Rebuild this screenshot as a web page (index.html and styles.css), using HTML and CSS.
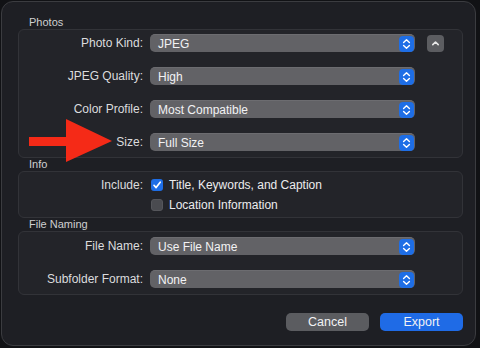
FILE: index.html
```html
<!DOCTYPE html>
<html>
<head>
<meta charset="utf-8">
<link rel="stylesheet" href="styles.css">
</head>
<body>
<div class="window">
  <div class="section-title">Photos</div>
  <div class="box photos">
    <div class="row">
      <div class="label">Photo Kind:</div>
      <div class="popup"><span>JPEG</span><span class="stepper"><svg width="15" height="16" viewBox="0 0 15 16"><path d="M4.6 6.6 L7.5 3.8 L10.4 6.6 M4.6 9.4 L7.5 12.2 L10.4 9.4" fill="none" stroke="#fff" stroke-width="1.4" stroke-linecap="round" stroke-linejoin="round"/></svg></span></div>
      <div class="disclosure"><svg width="17" height="17" viewBox="0 0 17 17"><path d="M5.8 9.6 L8.5 7 L11.2 9.6" fill="none" stroke="#e8e8e8" stroke-width="1.6" stroke-linecap="round" stroke-linejoin="round"/></svg></div>
    </div>
    <div class="row">
      <div class="label">JPEG Quality:</div>
      <div class="popup"><span>High</span><span class="stepper"><svg width="15" height="16" viewBox="0 0 15 16"><path d="M4.6 6.6 L7.5 3.8 L10.4 6.6 M4.6 9.4 L7.5 12.2 L10.4 9.4" fill="none" stroke="#fff" stroke-width="1.4" stroke-linecap="round" stroke-linejoin="round"/></svg></span></div>
    </div>
    <div class="row">
      <div class="label">Color Profile:</div>
      <div class="popup"><span>Most Compatible</span><span class="stepper"><svg width="15" height="16" viewBox="0 0 15 16"><path d="M4.6 6.6 L7.5 3.8 L10.4 6.6 M4.6 9.4 L7.5 12.2 L10.4 9.4" fill="none" stroke="#fff" stroke-width="1.4" stroke-linecap="round" stroke-linejoin="round"/></svg></span></div>
    </div>
    <div class="row">
      <div class="label">Size:</div>
      <div class="popup"><span>Full Size</span><span class="stepper"><svg width="15" height="16" viewBox="0 0 15 16"><path d="M4.6 6.6 L7.5 3.8 L10.4 6.6 M4.6 9.4 L7.5 12.2 L10.4 9.4" fill="none" stroke="#fff" stroke-width="1.4" stroke-linecap="round" stroke-linejoin="round"/></svg></span></div>
    </div>
  </div>

  <div class="section-title">Info</div>
  <div class="box info">
    <div class="check-row">
      <div class="label">Include:</div>
      <span class="checkbox checked"><svg width="12" height="12" viewBox="0 0 12 12"><path d="M3 6.3 L5.1 8.6 L9.2 3.2" fill="none" stroke="#fff" stroke-width="1.7" stroke-linecap="round" stroke-linejoin="round"/></svg></span>
      <span class="check-text">Title, Keywords, and Caption</span>
    </div>
    <div class="check-row">
      <div class="label"></div>
      <span class="checkbox"></span>
      <span class="check-text">Location Information</span>
    </div>
  </div>

  <div class="section-title">File Naming</div>
  <div class="box naming">
    <div class="row">
      <div class="label">File Name:</div>
      <div class="popup"><span>Use File Name</span><span class="stepper"><svg width="15" height="16" viewBox="0 0 15 16"><path d="M4.6 6.6 L7.5 3.8 L10.4 6.6 M4.6 9.4 L7.5 12.2 L10.4 9.4" fill="none" stroke="#fff" stroke-width="1.4" stroke-linecap="round" stroke-linejoin="round"/></svg></span></div>
    </div>
    <div class="row">
      <div class="label">Subfolder Format:</div>
      <div class="popup"><span>None</span><span class="stepper"><svg width="15" height="16" viewBox="0 0 15 16"><path d="M4.6 6.6 L7.5 3.8 L10.4 6.6 M4.6 9.4 L7.5 12.2 L10.4 9.4" fill="none" stroke="#fff" stroke-width="1.4" stroke-linecap="round" stroke-linejoin="round"/></svg></span></div>
    </div>
  </div>

  <div class="buttons">
    <div class="button cancel">Cancel</div>
    <div class="button export">Export</div>
  </div>
</div>
<svg class="arrow" width="86" height="46" viewBox="0 0 86 46"><polygon points="1,19 38,19 38,1 84,23 38,44 38,28 1,28" fill="#f52a17"/></svg>
</body>
</html>
```
FILE: styles.css
```css
html, body {
  margin: 0;
  padding: 0;
}
body {
  width: 480px;
  height: 348px;
  background: #111215;
  position: relative;
  overflow: hidden;
  font-family: "Liberation Sans", Arial, sans-serif;
  font-size: 12px;
  color: #e2e2e4;
}
.window {
  box-sizing: border-box;
  margin: 1px 4px 0 1px;
  width: 475px;
  height: 345px;
  border: 1px solid #3b3c40;
  border-radius: 12px;
  background: #1e1f24;
  padding: 14px 12px 0 16px;
  display: flex;
  flex-direction: column;
}
.section-title {
  font-size: 11px;
  line-height: 13px;
  height: 13px;
  padding-left: 11px;
  color: #cfcfd1;
}
.box {
  border: 1px solid #323338;
  border-radius: 6px;
  background: #232429;
  display: flex;
  flex-direction: column;
}
.photos {
  padding: 4px 0 6px 0;
  gap: 15px;
}
.info {
  padding: 5px 0 4px 0;
  gap: 4px;
}
.naming {
  padding: 5px 0 6px 0;
  gap: 15px;
}
.row {
  display: flex;
  align-items: center;
  height: 18px;
}
.label {
  width: 124px;
  flex: none;
  text-align: right;
  color: #dcdcde;
  margin-right: 7px;
  white-space: nowrap;
}
.popup {
  box-sizing: border-box;
  width: 265px;
  height: 18px;
  border-radius: 5px;
  background: #626266;
  border-top: 1px solid #6c6c70;
  display: flex;
  align-items: center;
  justify-content: space-between;
  padding: 0 1px 0 8px;
  color: #f2f2f4;
}
.stepper {
  width: 15px;
  height: 16px;
  border-radius: 4px;
  background: #1e6ee6;
  display: flex;
}
.disclosure {
  margin-left: 12px;
  width: 17px;
  height: 17px;
  border-radius: 4px;
  background: #5c5d61;
  display: flex;
}
.check-row {
  display: flex;
  align-items: center;
  height: 16px;
}
.checkbox {
  box-sizing: border-box;
  width: 12px;
  height: 12px;
  margin-left: 1px;
  margin-right: 6px;
  border-radius: 3px;
  background: #4a4b50;
  border: 1px solid #55565b;
  display: flex;
}
.checkbox.checked {
  background: #1e6ee6;
  border: none;
}
.check-text {
  color: #ececee;
}
.buttons {
  display: flex;
  justify-content: flex-end;
  gap: 11px;
  margin-top: 18px;
}
.button {
  width: 83px;
  height: 18px;
  line-height: 18px;
  border-radius: 5px;
  text-align: center;
  color: #f2f2f4;
  font-size: 12.5px;
}
.cancel {
  background: #5b5c60;
}
.export {
  background: #1f6be6;
}
.arrow {
  position: absolute;
  left: 28px;
  top: 118px;
}
```
